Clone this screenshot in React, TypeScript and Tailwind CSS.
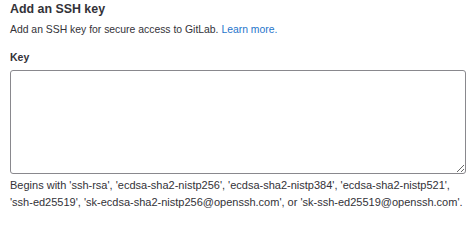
export default function App() {
  return (
    <div className="w-[474px] h-[215px] bg-white px-[10px] pt-[2px] font-['Liberation_Sans',Arial,sans-serif] text-[#333238]">
      <h2 className="text-[12.4px] leading-[15px] font-bold">Add an SSH key</h2>
      <p className="mt-[6px] text-[10.4px] leading-[14px]">
        Add an SSH key for secure access to GitLab.{" "}
        <a href="#" className="text-[#1f75cb]">
          Learn more.
        </a>
      </p>
      <label htmlFor="key" className="block mt-[13px] text-[10.5px] leading-[14px] font-bold">
        Key
      </label>
      <textarea
        id="key"
        className="mt-[6px] block w-[456px] h-[104px] rounded-[3px] border border-[#89888d] bg-white"
      />
      <p className="mt-[3px] text-[11px] leading-[17px]">
        Begins with 'ssh-rsa', 'ecdsa-sha2-nistp256', 'ecdsa-sha2-nistp384', 'ecdsa-sha2-nistp521',
        <br />
        'ssh-ed25519', 'sk-ecdsa-sha2-nistp256@openssh.com', or 'sk-ssh-ed25519@openssh.com'.
      </p>
    </div>
  );
}
